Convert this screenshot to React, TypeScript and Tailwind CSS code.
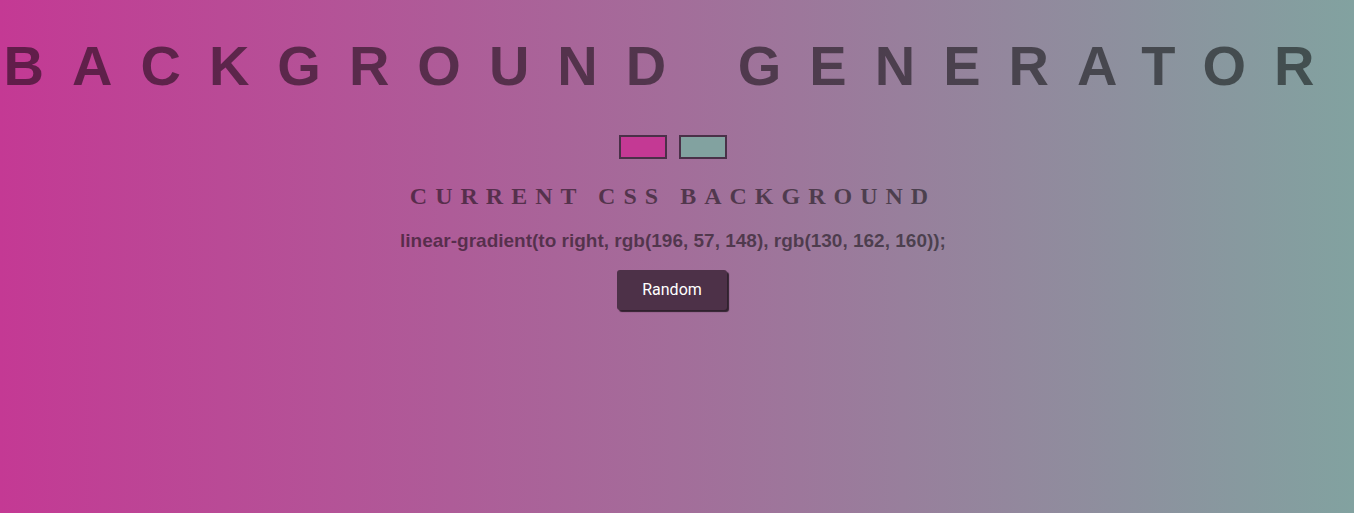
import { useState } from 'react'

const pairs: [string, string][] = [
  ['#c43994', '#82a2a0'],
  ['#3a7bd5', '#00d2ff'],
  ['#f7971e', '#ffd200'],
  ['#11998e', '#38ef7d'],
]

const toRgb = (hex: string) => {
  const n = parseInt(hex.slice(1), 16)
  return `rgb(${(n >> 16) & 255}, ${(n >> 8) & 255}, ${n & 255})`
}

export default function App() {
  const [colors, setColors] = useState<[string, string]>(pairs[0])
  const css = `linear-gradient(to right, ${toRgb(colors[0])}, ${toRgb(colors[1])})`

  const randomize = () => {
    const hex = () =>
      '#' +
      Math.floor(Math.random() * 0xffffff)
        .toString(16)
        .padStart(6, '0')
    setColors([hex(), hex()])
  }

  return (
    <main
      className="flex min-h-[513px] flex-col items-center overflow-hidden pr-[8px] text-[rgba(0,0,0,0.5)]"
      style={{ background: css }}
    >
      <h1 className="mt-[34px] whitespace-nowrap font-['Liberation_Sans',Arial,sans-serif] text-[56px] font-bold leading-[64px] tracking-[28px]">
        BACKGROUND GENERATOR
      </h1>

      <div className="mt-[37px] flex gap-[12px]">
        <div
          className="h-[24px] w-[48px] border-2 border-[#4a3048]"
          style={{ backgroundColor: colors[0] }}
        />
        <div
          className="h-[24px] w-[48px] border-2 border-[#4a3048]"
          style={{ backgroundColor: colors[1] }}
        />
      </div>

      <h3 className="mt-[23px] whitespace-nowrap font-['Liberation_Serif','Times_New_Roman',serif] text-[24px] font-bold leading-[28px] tracking-[8px]">
        CURRENT CSS BACKGROUND
      </h3>

      <p className="mt-[20px] whitespace-nowrap font-['Liberation_Sans',Arial,sans-serif] text-[19px] font-bold leading-[22px]">
        {css};
      </p>

      <button
        type="button"
        onClick={randomize}
        className="mt-[18px] -ml-[2px] h-[40px] w-[110px] rounded-[3px] bg-[#4d3148] font-['Roboto',sans-serif] text-[16px] text-white shadow-[2px_2px_1px_rgba(0,0,0,0.7)]"
      >
        Random
      </button>
    </main>
  )
}
